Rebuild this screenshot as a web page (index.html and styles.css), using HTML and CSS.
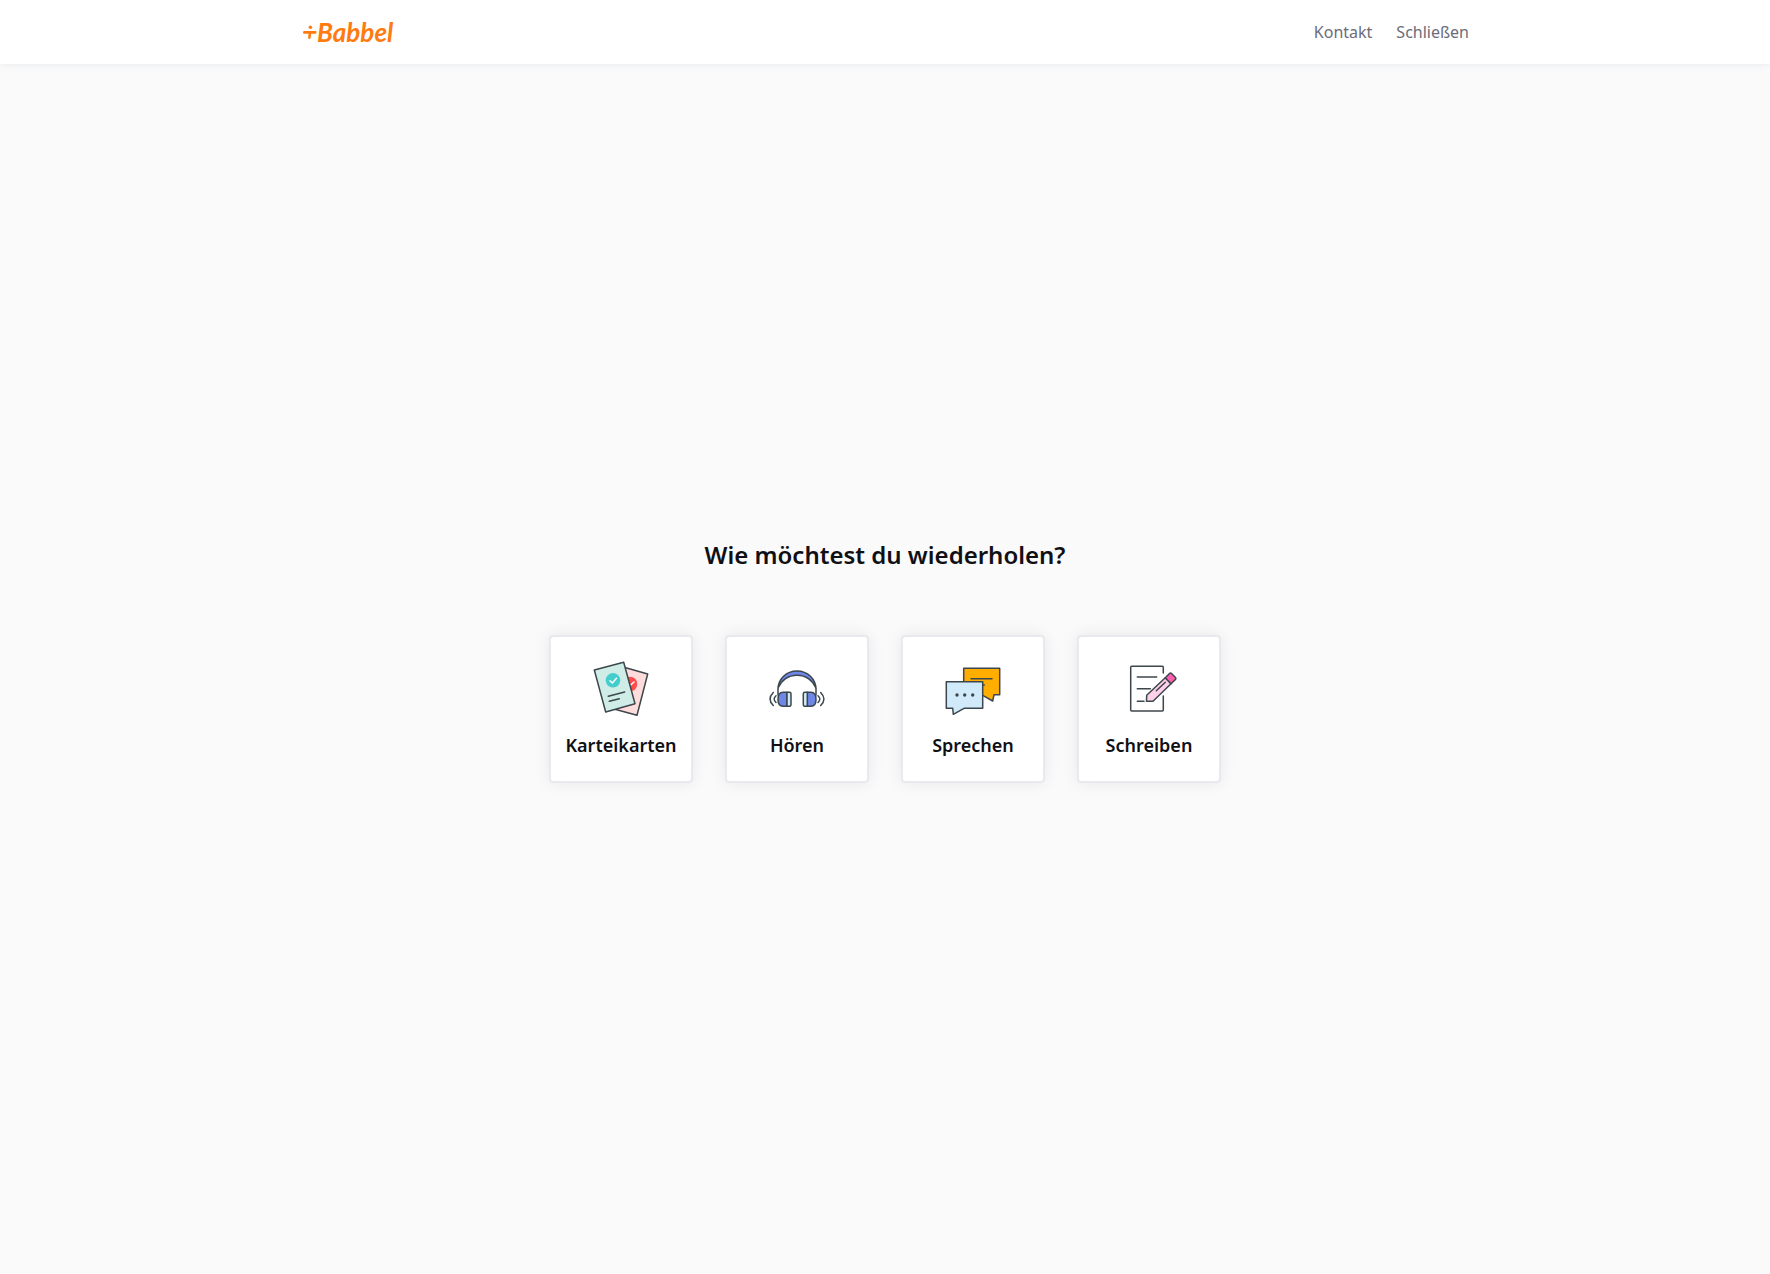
FILE: index.html
```html
<!DOCTYPE html>
<html lang="de">
<head>
    <meta charset="UTF-8">
    <meta name="viewport" content="width=device-width, initial-scale=1.0">
    <title>Babbel - Wiederholen</title>
    <link rel="stylesheet" href="styles.css">
</head>
<body>

<header class="header">
    <div class="header-inner">
        <a href="#" class="logo">
            <svg class="logo-mark" viewBox="-2 0 16 16" aria-hidden="true">
                <path d="M1.3 8.4H12.3M7 8.4L6.4 13.6" fill="none" stroke="currentColor" stroke-width="2.6" stroke-linecap="round"/>
                <circle cx="7.4" cy="3.2" r="1.8" fill="currentColor"/>
            </svg>
            <span>Babbel</span>
        </a>
        <nav class="nav">
            <a href="#">Kontakt</a>
            <a href="#">Schließen</a>
        </nav>
    </div>
</header>

<main class="main">
    <h1>Wie möchtest du wiederholen?</h1>

    <div class="cards">
        <button class="card" type="button">
            <svg class="icon" viewBox="0 0 64 64" aria-hidden="true">
                <path d="M35 10.2L58.7 17L48 58.3L24 51.8Z" fill="#ffdcdc"/>
                <circle cx="41" cy="27" r="7.3" fill="#ff4b4b" stroke="none"/>
                <path class="check" d="M38.5 27L40.5 29L45 25"/>
                <path d="M5.3 13L34.7 5.3L46 46.7L16.7 55Z" fill="#d0ece7"/>
                <circle cx="24" cy="23.3" r="7.3" fill="#45cdcd" stroke="none"/>
                <path class="check" d="M21 23.7L23.3 26L27.5 21.3"/>
                <path d="M19.3 39.3L35.7 35M20.3 44.3L30.3 41.7"/>
            </svg>
            <span>Karteikarten</span>
        </button>

        <button class="card" type="button">
            <svg class="icon" viewBox="0 0 64 64" aria-hidden="true">
                <path d="M13 38V32.5C13 22 21.5 14 32 14S51 22 51 32.5V38V31C48 23.5 41 18.3 32 18.3S16 23.5 13 31Z" fill="#6f88e8"/>
                <path d="M22 35.3H18C14.5 35.3 13 38 13 42.3S14.5 49.3 18 49.3H22Z" fill="#6f88e8"/>
                <path d="M22 35.3H24.5Q26 35.3 26 36.8V47.8Q26 49.3 24.5 49.3H22Z" fill="#d0ebf5"/>
                <path d="M42.3 35.3H46C49.5 35.3 51 38 51 42.3S49.5 49.3 46 49.3H42.3Z" fill="#6f88e8"/>
                <path d="M42.3 35.3H39.8Q38.3 35.3 38.3 36.8V47.8Q38.3 49.3 39.8 49.3H42.3Z" fill="#d0ebf5"/>
                <path d="M11 38.7Q7.3 42 11 45.5M8.3 35.5Q1.8 42 8.3 48.5M53 38.7Q56.7 42 53 45.5M55.7 35.5Q62.2 42 55.7 48.5"/>
            </svg>
            <span>Hören</span>
        </button>

        <button class="card" type="button">
            <svg class="icon" viewBox="0 0 64 64" aria-hidden="true">
                <path d="M22.7 11.3H58.7V37.7H53L51.7 44L41.7 38.3H22.7Z" fill="#ffae00"/>
                <path d="M30 21.7H51M30 28H43.3"/>
                <path d="M5.3 24.7H41.7V51.3H23L12.3 57.3L11.7 51.3H5.3Z" fill="#d0eafa"/>
                <g fill="#3c464d" stroke="none">
                    <circle cx="16" cy="38" r="1.7"/>
                    <circle cx="23.7" cy="38" r="1.7"/>
                    <circle cx="31.7" cy="38" r="1.7"/>
                </g>
            </svg>
            <span>Sprechen</span>
        </button>

        <button class="card" type="button">
            <svg class="icon" viewBox="0 0 64 64" aria-hidden="true">
                <path d="M46.3 16V10.3Q46.3 9.3 45.3 9.3H14.7Q13.7 9.3 13.7 10.3V53Q13.7 54 14.7 54H45.3Q46.3 54 46.3 53V39"/>
                <path d="M20.3 20H39.7M20.3 31.7H33.3M20.3 44.3H27"/>
                <path d="M29.5 44.3L29.7 38.3L48.3 20.8L54 26.7L36 44.3Z" fill="#ffd0ea"/>
                <path d="M48.3 20.8L52.5 16.5Q53.5 15.5 54.5 16.5L58.5 20.5Q59.4 21.4 58.5 22.4L54 26.7Z" fill="#ff5fae"/>
                <path d="M39.3 33.7L48.3 25.3"/>
            </svg>
            <span>Schreiben</span>
        </button>
    </div>
</main>

</body>
</html>
```
FILE: styles.css
```css
:root {
    --brand-color: #ff7b0f;
    --bg-color: #fafafa;
    --text-color: #101014;
    --nav-color: #6c6c7a;
    --icon-color: #3c464d;
}

* {
    box-sizing: border-box;
}

body {
    font-family: "Noto Sans", "Open Sans", sans-serif;
    background-color: var(--bg-color);
    color: var(--text-color);
    margin: 0;
    min-height: 100vh;
    display: flex;
    flex-direction: column;
}

.header {
    background: white;
    box-shadow: 0 0 8px rgba(60, 80, 110, 0.1);
}

.header-inner {
    max-width: 1200px;
    height: 64px;
    margin: 0 auto;
    padding: 0 16px;
    display: flex;
    justify-content: space-between;
    align-items: center;
}

.logo {
    display: flex;
    align-items: center;
    color: var(--brand-color);
    font-family: Lato, sans-serif;
    font-size: 26px;
    font-weight: bold;
    font-style: italic;
    line-height: 32px;
    text-decoration: none;
}

.logo-mark {
    width: 16px;
    height: 16px;
}

.nav {
    display: flex;
    gap: 24px;
}

.nav a {
    color: var(--nav-color);
    font-size: 16px;
    line-height: 24px;
    text-decoration: none;
}

.main {
    flex: 1;
    display: flex;
    flex-direction: column;
    align-items: center;
    justify-content: center;
    padding: 0 16px 16px;
}

h1 {
    margin: 0 0 64px;
    font-size: 24px;
    font-weight: 600;
    line-height: 32px;
    text-align: center;
}

.cards {
    display: flex;
    flex-wrap: wrap;
    justify-content: center;
    gap: 32px;
}

.card {
    width: 144px;
    padding: 20px 0 24px;
    display: flex;
    flex-direction: column;
    align-items: center;
    gap: 12px;
    background: white;
    border: 2px solid #e8e8ee;
    border-radius: 4px;
    box-shadow: 0 0 16px rgba(0, 0, 0, 0.08);
    color: var(--text-color);
    font-family: inherit;
    font-size: 18px;
    font-weight: 600;
    line-height: 24px;
    cursor: pointer;
}

.icon {
    width: 64px;
    height: 64px;
    fill: none;
    stroke: var(--icon-color);
    stroke-width: 1.5;
    stroke-linecap: round;
    stroke-linejoin: round;
}

.icon .check {
    stroke: white;
}
```
